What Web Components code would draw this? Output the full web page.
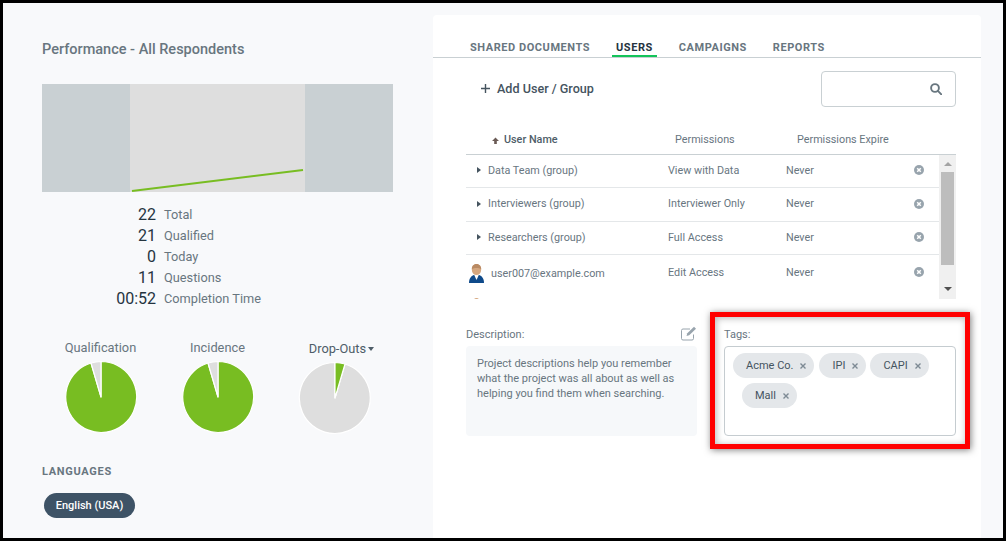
<!DOCTYPE html>
<html>
<head>
<meta charset="utf-8">
<style>
  html, body { margin: 0; padding: 0; background: #000; }
  body { font-family: Roboto, "Liberation Sans", sans-serif; }
</style>
</head>
<body>
<project-page>
  <perf-panel slot="left">
    <stat-row num="22">Total</stat-row>
    <stat-row num="21">Qualified</stat-row>
    <stat-row num="0">Today</stat-row>
    <stat-row num="11">Questions</stat-row>
    <stat-row num="00:52">Completion Time</stat-row>
    <pie-chart slot="pies" label="Qualification" mode="main"></pie-chart>
    <pie-chart slot="pies" label="Incidence" mode="main"></pie-chart>
    <pie-chart slot="pies" label="Drop-Outs" mode="minor" menu></pie-chart>
  </perf-panel>
  <detail-card slot="right">
    <tab-bar></tab-bar>
    <user-tools></user-tools>
    <user-table>
      <user-row name="Data Team (group)" perm="View with Data" group></user-row>
      <user-row name="Interviewers (group)" perm="Interviewer Only" group></user-row>
      <user-row name="Researchers (group)" perm="Full Access" group></user-row>
      <user-row name="user007@example.com" perm="Edit Access"></user-row>
    </user-table>
    <div slot="bottom" style="display:contents">
      <desc-box></desc-box>
      <tags-box>
        <tag-chip>Acme Co.</tag-chip>
        <tag-chip>IPI</tag-chip>
        <tag-chip style="margin-left:-1px">CAPI</tag-chip>
        <tag-chip style="margin-left:9px">Mall</tag-chip>
      </tags-box>
    </div>
  </detail-card>
</project-page>

<script>
const make = (name, html) => {
  customElements.define(name, class extends HTMLElement {
    connectedCallback() {
      if (this.shadowRoot) return
      const root = this.attachShadow({ mode: 'open' })
      root.innerHTML = typeof html === 'function' ? html(this) : html
    }
  })
}

make('project-page', `
  <style>
    :host {
      display: flex;
      box-sizing: border-box;
      width: 1006px;
      height: 541px;
      border: 3px solid #000;
      background: #f8f9fb;
      overflow: hidden;
    }
  </style>
  <slot name="left"></slot>
  <slot name="right"></slot>
`)

make('perf-panel', `
  <style>
    :host { display: block; width: 430px; flex: none; padding-left: 39px; box-sizing: border-box; color: #68767f; }
    h2 { margin: 0; padding-top: 38px; font-size: 14.5px; line-height: 18px; font-weight: 500; color: #68767f; }
    svg { display: block; margin-top: 25px; }
    .stats { margin-top: 12px; }
    .pies { display: flex; margin-top: 31px; }
    h3 { margin: 30px 0 0; font-size: 11px; line-height: 14px; font-weight: 700; letter-spacing: .7px; color: #68767f; }
    .pill {
      display: inline-block;
      margin: 14px 0 0 2px;
      width: 91px;
      height: 25px;
      line-height: 25px;
      text-align: center;
      border-radius: 13px;
      background: #3e5366;
      color: #fff;
      font-size: 11px;
      font-weight: 500;
    }
  </style>
  <h2>Performance - All Respondents</h2>
  <svg width="351" height="108" viewBox="0 0 351 108">
    <rect width="351" height="108" fill="#c9d0d3"/>
    <rect x="88" width="175" height="108" fill="#dedede"/>
    <path d="M90 107 L261 86" stroke="#78bd22" stroke-width="2" fill="none"/>
  </svg>
  <div class="stats"><slot></slot></div>
  <div class="pies"><slot name="pies"></slot></div>
  <h3>LANGUAGES</h3>
  <span class="pill">English (USA)</span>
`)

make('stat-row', el => `
  <style>
    :host { display: flex; align-items: center; height: 21px; }
    b { width: 114px; text-align: right; font-size: 16px; font-weight: 400; color: #25343f; }
    span { margin-left: 8px; font-size: 12.75px; color: #68767f; }
  </style>
  <b>${el.getAttribute('num')}</b><span><slot></slot></span>
`)

make('pie-chart', el => {
  const main = el.getAttribute('mode') === 'main'
  const big = 'M0 0 L0 -35.5 A35.5 35.5 0 1 1 -10 -34 Z'
  const small = 'M0 0 L-10 -34 A35.5 35.5 0 0 1 0 -35.5 Z'
  const flip = main ? '' : 'transform="scale(-1 1)"'
  const menu = el.hasAttribute('menu')
  return `
  <style>
    :host { display: block; width: 117px; text-align: center; }
    .t { font-size: 12.8px; line-height: 16px; color: #68767f; height: 16px; }
    .t.m { color: #4e5d68; margin-top: 1px; padding-left: 14px; }
    i { display: inline-block; width: 0; height: 0; margin-left: -1px; vertical-align: 2px;
        border: 3px solid transparent; border-top: 4px solid #4e5d68; border-bottom: 0; }
    svg { display: block; margin: 4px auto 0; }
  </style>
  <div class="t${menu ? ' m' : ''}">${el.getAttribute('label')}${menu ? ' <i></i>' : ''}</div>
  <svg width="74" height="74" viewBox="-37 -37 74 74">
    <g ${flip} stroke="#fff" stroke-width="1.2" stroke-linejoin="round">
      <path d="${big}" fill="${main ? '#78bd22' : '#dedede'}"/>
      <path d="${small}" fill="${main ? '#dedede' : '#78bd22'}"/>
    </g>
  </svg>`
})

make('detail-card', `
  <style>
    :host {
      display: block;
      box-sizing: border-box;
      width: 548px;
      flex: none;
      margin-top: 12px;
      background: #fff;
      border-radius: 4px 4px 0 0;
    }
    .bottom { display: flex; align-items: flex-start; margin: 13px 0 0 33px; }
  </style>
  <slot></slot>
  <div class="bottom"><slot name="bottom"></slot></div>
`)

make('tab-bar', `
  <style>
    :host {
      display: flex;
      height: 43px;
      box-sizing: border-box;
      padding: 24px 0 0 33px;
      gap: 18px;
      border-bottom: 1px solid #c9d0d3;
    }
    a {
      padding: 0 4px;
      height: 18px;
      box-sizing: border-box;
      font-size: 11px;
      line-height: 18px;
      font-weight: 700;
      letter-spacing: .55px;
      color: #68767f;
    }
    a.on { color: #25343f; border-bottom: 2px solid #14c45a; }
  </style>
  <a>SHARED DOCUMENTS</a><a class="on">USERS</a><a>CAMPAIGNS</a><a>REPORTS</a>
`)

make('user-tools', `
  <style>
    :host {
      display: flex;
      align-items: center;
      justify-content: space-between;
      margin: 13px 25px 0 48px;
      height: 36px;
      color: #45545f;
    }
    .add { display: flex; align-items: center; padding-bottom: 2px; font-size: 12.6px; font-weight: 500; }
    .add svg { margin-right: 7px; }
    .search {
      box-sizing: border-box;
      width: 135px;
      height: 36px;
      padding-right: 13px;
      display: flex;
      align-items: center;
      justify-content: flex-end;
      border: 1px solid #c9d0d3;
      border-radius: 4px;
      background: #fff;
    }
  </style>
  <div class="add">
    <svg width="9" height="9" viewBox="0 0 9 9"><path d="M4.5 0V9M0 4.5H9" stroke="#45545f" stroke-width="1.4"/></svg>
    Add User / Group
  </div>
  <div class="search">
    <svg width="12" height="12" viewBox="0 0 12 12" fill="none" stroke="#68767f" stroke-width="1.9">
      <circle cx="5" cy="5" r="3.9"/><path d="M7.9 7.9L11.3 11.3" stroke-linecap="round"/>
    </svg>
  </div>
`)

make('user-table', `
  <style>
    :host { display: block; margin: 0 25px 0 33px; font-size: 10.8px; color: #68767f; }
    .head {
      display: grid;
      grid-template-columns: 209px 122px 1fr;
      align-items: center;
      height: 48px;
      box-sizing: border-box;
      padding-top: 19px;
      line-height: 14px;
      border-bottom: 1px solid #c9d0d3;
    }
    .name { display: flex; align-items: center; padding-left: 26px; color: #4e5d68; font-weight: 500; font-size: 10.8px; }
    .name svg { margin-right: 5px; }
    .wrap { display: flex; height: 144px; }
    .list { flex: 1; overflow: hidden; }
    .extra { display: block; margin: 9px 0 0 3px; }
    .bar { width: 17px; flex: none; background: #f0f0f0; display: flex; flex-direction: column; align-items: center; }
    .bar .up, .bar .down { width: 0; height: 0; border: 4px solid transparent; border-top: 0; }
    .bar .up { margin-top: 7px; border-bottom: 4px solid #a3a3a3; }
    .bar .thumb { width: 13px; height: 93px; margin-top: 6px; background: #bdbdbd; }
    .bar .down { margin-top: 22px; border: 4px solid transparent; border-bottom: 0; border-top: 4px solid #505050; }
  </style>
  <div class="head">
    <div class="name">
      <svg width="7" height="7" viewBox="0 0 8 8"><path d="M4 .5L8 4.5H5.5V8H2.5V4.5H0Z" fill="#6a5a55"/></svg>
      User Name
    </div>
    <div>Permissions</div>
    <div>Permissions Expire</div>
  </div>
  <div class="wrap">
    <div class="list">
      <slot></slot>
      <svg class="extra" width="15" height="19" viewBox="0 0 15 19"><ellipse cx="7.5" cy="5" rx="4" ry="5" fill="#d5a77f"/></svg>
    </div>
    <div class="bar"><span class="up"></span><span class="thumb"></span><span class="down"></span></div>
  </div>
`)

const avatar = `<svg width="15" height="19" viewBox="0 0 15 19">
  <path d="M0 19C0 13.5 3 11.5 5 11H10C12 11.5 15 13.5 15 19Z" fill="#0f4a8a"/>
  <path d="M5.2 11L7.5 16L9.8 11Z" fill="#fff"/>
  <ellipse cx="7.5" cy="5.5" rx="4.7" ry="5.5" fill="#d5a77f"/>
  <path d="M2.8 5C2.8 1.5 5.2 0 7.5 0S12.2 1.5 12.2 5C10 3.5 5 3.5 2.8 5Z" fill="#b98a63"/>
</svg>`

make('user-row', el => {
  const group = el.hasAttribute('group')
  return `
  <style>
    :host {
      display: grid;
      grid-template-columns: 202px 118px 128px 25px;
      align-items: center;
      height: 33px;
      box-sizing: border-box;
      padding-bottom: 2px;
      border-bottom: 1px solid #e4e7e9;
    }
    :host(:nth-of-type(2)) { height: 34px; }
    :host([group]) .n { padding-left: 11px; }
    :host(:not([group])) { border-bottom: 0; height: 34px; padding-bottom: 0; }
    .n { display: flex; align-items: center; }
    :host(:not([group])) .n { padding-top: 2px; }
    .c { display: inline-block; width: 0; height: 0; margin-right: 7px;
         border: 3.5px solid transparent; border-left: 4px solid #45545f; border-right: 0; }
    .a { display: flex; margin: 0 7px 0 3px; }
    svg.x { display: block; }
  </style>
  <div class="n">${group ? '<i class="c"></i>' : `<span class="a">${avatar}</span>`}${el.getAttribute('name')}</div>
  <div>${el.getAttribute('perm')}</div>
  <div>Never</div>
  <svg class="x" width="10" height="10" viewBox="0 0 10 10">
    <circle cx="5" cy="5" r="5" fill="#98a4ad"/>
    <path d="M3.2 3.2L6.8 6.8M6.8 3.2L3.2 6.8" stroke="#fff" stroke-width="1.5"/>
  </svg>`
})

make('desc-box', `
  <style>
    :host { display: block; width: 231px; flex: none; margin-top: 15px; color: #68767f; }
    .top { display: flex; justify-content: space-between; align-items: flex-start; height: 19px; font-size: 11px; line-height: 14px; }
    .top span { margin-top: 1px; }
    .top svg { margin-top: -1px; }
    .box {
      box-sizing: border-box;
      height: 90px;
      padding: 10px 11px;
      background: #f6f8fa;
      border-radius: 4px;
      font-size: 11px;
      line-height: 15px;
    }
  </style>
  <div class="top"><span>Description:</span>
    <svg width="16" height="15" viewBox="0 0 16 15" fill="none" stroke="#98a4ad">
      <path d="M12.5 8.5V12.5A1.5 1.5 0 0 1 11 14H2A1.5 1.5 0 0 1 .5 12.5V4.5A1.5 1.5 0 0 1 2 3H9"/>
      <path d="M5.5 10L6.3 7.3L13 .8L15 2.8L8.2 9.3Z" fill="#98a4ad" stroke="none"/>
    </svg>
  </div>
  <div class="box">Project descriptions help you remember what the project was all about as well as helping you find them when searching.</div>
`)

make('tags-box', `
  <style>
    :host {
      display: block;
      box-sizing: border-box;
      width: 260px;
      height: 137px;
      flex: none;
      margin-left: 13px;
      padding: 10px 9px 9px;
      border: 5px solid #f00;
      box-shadow: 1px 1px 7px rgba(0,0,0,.5), inset 1px 1px 7px rgba(0,0,0,.3);
      color: #68767f;
      font-size: 11px;
    }
    .l { box-sizing: border-box; height: 19px; padding-top: 1px; line-height: 14px; }
    .box {
      box-sizing: border-box;
      width: 232px;
      height: 90px;
      padding: 6px 8px;
      display: flex;
      flex-wrap: wrap;
      align-content: flex-start;
      gap: 5px;
      border: 1px solid #c5ccd0;
      border-radius: 4px;
      background: #fff;
    }
  </style>
  <div class="l">Tags:</div>
  <div class="box"><slot></slot></div>
`)

make('tag-chip', `
  <style>
    :host {
      display: inline-flex;
      align-items: center;
      height: 25px;
      padding: 0 8px 0 13px;
      border-radius: 13px;
      background: #e4e7ea;
      color: #45545f;
      font-size: 11px;
    }
    svg { margin-left: 7px; }
  </style>
  <slot></slot>
  <svg width="6" height="6" viewBox="0 0 6 6"><path d="M.5 .5L5.5 5.5M5.5 .5L.5 5.5" stroke="#7d8a94" stroke-width="1.4"/></svg>
`)
</script>
</body>
</html>
